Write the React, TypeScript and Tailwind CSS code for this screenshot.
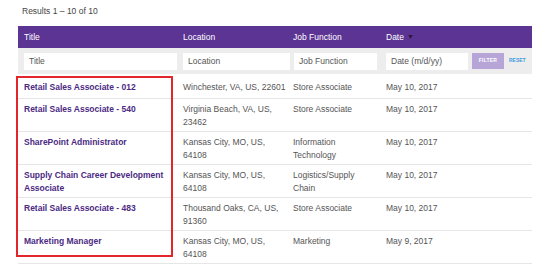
const rows = [
  { title: "Retail Sales Associate - 012", location: "Winchester, VA, US, 22601", fn: "Store Associate", date: "May 10, 2017" },
  { title: "Retail Sales Associate - 540", location: "Virginia Beach, VA, US, 23462", fn: "Store Associate", date: "May 10, 2017" },
  { title: "SharePoint Administrator", location: "Kansas City, MO, US, 64108", fn: "Information Technology", date: "May 10, 2017" },
  { title: "Supply Chain Career Development Associate", location: "Kansas City, MO, US, 64108", fn: "Logistics/Supply Chain", date: "May 10, 2017" },
  { title: "Retail Sales Associate - 483", location: "Thousand Oaks, CA, US, 91360", fn: "Store Associate", date: "May 10, 2017" },
  { title: "Marketing Manager", location: "Kansas City, MO, US, 64108", fn: "Marketing", date: "May 9, 2017" },
];

const cols = "grid grid-cols-[159px_113px_90px_152px]";

export default function App() {
  return (
    <div className="w-[550px] h-[267px] overflow-hidden bg-white font-['Liberation_Sans',Arial,sans-serif] text-[8.5px]">
      <div className="pl-[22px] pt-[5px] h-[26px] text-[#444] leading-[12px]">Results 1 – 10 of 10</div>

      <div className="relative ml-[18px] w-[514px]">
        <div className={`${cols} h-[22px] bg-[#5c3494] text-white items-center`}>
          <div className="pl-[6px]">Title</div>
          <div className="pl-[6px]">Location</div>
          <div className="pl-[3px]">Job Function</div>
          <div className="pl-[6px] flex items-center gap-[3px]">
            Date <span className="text-[#2a163f] text-[7px]">▼</span>
          </div>
        </div>

        <div className="flex items-center h-[26px] bg-[#ededed] pl-[6px]">
          <div className="w-[153px] h-[17px] bg-white pl-[5px] flex items-center text-[#555]">Title</div>
          <div className="ml-[6px] w-[107px] h-[17px] bg-white pl-[5px] flex items-center text-[#555]">Location</div>
          <div className="ml-[4px] w-[83px] h-[17px] bg-white pl-[5px] flex items-center text-[#555]">Job Function</div>
          <div className="ml-[9px] w-[82px] h-[17px] bg-white pl-[5px] flex items-center text-[#555]">Date (m/d/yy)</div>
          <div className="ml-[4px] w-[32px] h-[16px] bg-[#b7a5d8] text-white text-[5px] font-bold flex items-center justify-center tracking-[0.2px]">FILTER</div>
          <div className="ml-[5px] text-[#3d9be0] text-[5px] font-bold">RESET</div>
        </div>

        {rows.map((r, i) => (
          <div
            key={i}
            className={`${cols} border-b border-[#e6e6e6] leading-[13px] text-[#555] ${i === 0 ? "pt-[7px] pb-[4px]" : "pt-[4px] pb-[2px]"}`}
          >
            <div className="pl-[6px] pr-[8px] font-bold text-[#4c2a83]">{r.title}</div>
            <div className="pl-[6px]">{r.location}</div>
            <div className="pl-[3px] pr-[4px]">{r.fn}</div>
            <div className="pl-[6px]">{r.date}</div>
          </div>
        ))}

        <div className="absolute left-[-2px] top-[50px] w-[157px] h-[181px] border-2 border-[#e3262b]" />
      </div>
    </div>
  );
}
